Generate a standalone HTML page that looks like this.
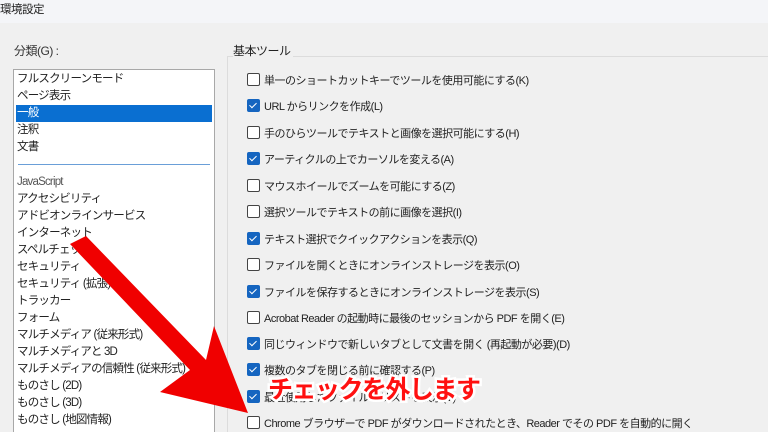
<!DOCTYPE html>
<html><head><meta charset="utf-8"><style>
*{margin:0;padding:0;box-sizing:border-box}
html,body{width:768px;height:432px;overflow:hidden}
body{background:#f0f0f0;font-family:"Liberation Sans","Noto Sans CJK JP",sans-serif;color:#1a1a1a;position:relative}
.title{position:absolute;left:0;top:0;width:768px;height:23px;background:#f4f5f8;font-size:11.5px;line-height:20px;color:#222;letter-spacing:-0.5px}
.lab{position:absolute;left:14px;top:42px;font-size:12px;color:#333;letter-spacing:-0.5px}
.list{position:absolute;left:13px;top:69px;width:202px;height:363px;background:#fff;border:1px solid #a8a8a8;border-bottom:none;overflow:hidden}
.it{position:absolute;left:2px;font-size:11.5px;line-height:17px;height:17px;white-space:nowrap;color:#222;padding-left:1px;letter-spacing:-0.8px}
.sel{background:#0a6fd1;color:#fff;width:196px}
.sep{position:absolute;left:4px;top:94px;width:192px;height:1px;background:#6a9fd8}
.grp{position:absolute;left:227px;top:56px;width:541px;height:376px;border-left:1px solid #dcdcdc;border-top:1px solid #dcdcdc}
.gl{position:absolute;left:233px;top:42px;font-size:12px;background:#f0f0f0;padding-right:2px;color:#222;letter-spacing:-0.5px}
.row{position:absolute;left:247px;font-size:11px;white-space:nowrap;line-height:14px;color:#222;letter-spacing:-0.5px}
.cb{display:inline-block;width:13px;height:13px;border:1px solid #444;border-radius:2px;background:#fff;vertical-align:-2px;margin-right:4px;position:relative}
.on{background:#1565c0;border-color:#1565c0}
.on:after{content:"";position:absolute;left:3px;top:1px;width:3px;height:6px;border:solid #fff;border-width:0 1.5px 1.5px 0;transform:rotate(45deg)}
.big{position:absolute;left:268px;top:370px;font-size:25px;font-weight:bold;color:#ff1010;-webkit-text-stroke:5px #fff;paint-order:stroke fill;white-space:nowrap;letter-spacing:-1.5px;font-family:"Noto Sans CJK JP",sans-serif}
</style></head><body>
<div class="title">環境設定</div>
<div class="lab">分類(G) :</div>
<div class="list">
<div class="it" style="top:1px">フルスクリーンモード</div>
<div class="it" style="top:18px">ページ表示</div>
<div class="it sel" style="top:35px">一般</div>
<div class="it" style="top:52px">注釈</div>
<div class="it" style="top:69px">文書</div>
<div class="sep"></div>
<div class="it" style="top:104px;color:#555">JavaScript</div>
<div class="it" style="top:121px">アクセシビリティ</div>
<div class="it" style="top:138px">アドビオンラインサービス</div>
<div class="it" style="top:155px">インターネット</div>
<div class="it" style="top:172px">スペルチェック</div>
<div class="it" style="top:189px">セキュリティ</div>
<div class="it" style="top:206px">セキュリティ (拡張)</div>
<div class="it" style="top:223px">トラッカー</div>
<div class="it" style="top:240px">フォーム</div>
<div class="it" style="top:257px">マルチメディア (従来形式)</div>
<div class="it" style="top:274px">マルチメディアと 3D</div>
<div class="it" style="top:291px">マルチメディアの信頼性 (従来形式)</div>
<div class="it" style="top:308px">ものさし (2D)</div>
<div class="it" style="top:325px">ものさし (3D)</div>
<div class="it" style="top:342px">ものさし (地図情報)</div>
</div>
<div class="grp"></div>
<div class="gl">基本ツール</div>
<div class="row" style="top:73px"><span class="cb"></span>単一のショートカットキーでツールを使用可能にする(K)</div>
<div class="row" style="top:99px"><span class="cb on"></span>URL からリンクを作成(L)</div>
<div class="row" style="top:126px"><span class="cb"></span>手のひらツールでテキストと画像を選択可能にする(H)</div>
<div class="row" style="top:152px"><span class="cb on"></span>アーティクルの上でカーソルを変える(A)</div>
<div class="row" style="top:179px"><span class="cb"></span>マウスホイールでズームを可能にする(Z)</div>
<div class="row" style="top:205px"><span class="cb"></span>選択ツールでテキストの前に画像を選択(I)</div>
<div class="row" style="top:232px"><span class="cb on"></span>テキスト選択でクイックアクションを表示(Q)</div>
<div class="row" style="top:258px"><span class="cb"></span>ファイルを開くときにオンラインストレージを表示(O)</div>
<div class="row" style="top:285px"><span class="cb on"></span>ファイルを保存するときにオンラインストレージを表示(S)</div>
<div class="row" style="top:311px"><span class="cb"></span>Acrobat Reader の起動時に最後のセッションから PDF を開く(E)</div>
<div class="row" style="top:337px"><span class="cb on"></span>同じウィンドウで新しいタブとして文書を開く (再起動が必要)(D)</div>
<div class="row" style="top:363px"><span class="cb on"></span>複数のタブを閉じる前に確認する(P)</div>
<div class="row" style="top:390px"><span class="cb on"></span>最近使用したファイルのリストを表示(V)</div>
<div class="row" style="top:416px"><span class="cb"></span>Chrome ブラウザーで PDF がダウンロードされたとき、Reader でその PDF を自動的に開く</div>
<svg style="position:absolute;left:0;top:0" width="768" height="432"><polygon points="70,244 86,236 206,360 214,326 248,413 160,392 190,370" fill="#f00000"/></svg>
<div class="big">チェックを外します</div>
</body></html>
